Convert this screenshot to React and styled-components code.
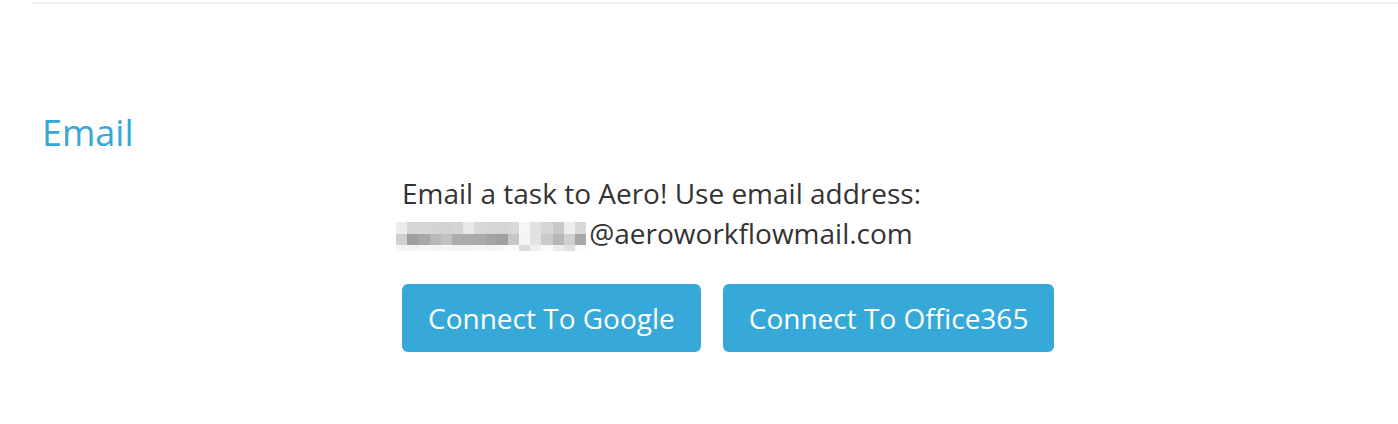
import React from "react";
import styled, { createGlobalStyle } from "styled-components";

const GlobalStyle = createGlobalStyle`
  body {
    margin: 0;
    background: #fff;
    font-family: "Open Sans", "Liberation Sans", sans-serif;
  }
`;

const Page = styled.div`
  width: 1398px;
  height: 424px;
  padding-left: 32px;
  box-sizing: border-box;
  overflow: hidden;
`;

const Divider = styled.div`
  margin-top: 2px;
  border-top: 2px solid #ededed;
`;

const Section = styled.section`
  padding: 104px 0 0 10px;
`;

const Heading = styled.h2`
  margin: 0;
  font-size: 36px;
  font-weight: 400;
  line-height: 50px;
  color: #35a8d8;
`;

const Body = styled.div`
  margin-left: 360px;
  margin-top: 15px;
`;

const Text = styled.p`
  margin: 0;
  font-size: 28px;
  line-height: 40px;
  color: #333;
`;

// pixelated mask over the private part of the address
const Blur = styled.span`
  display: inline-block;
  overflow: hidden;
  vertical-align: -7px;
  margin: 0 3px 0 -6px;
`;

const BlurGrid = styled.span`
  display: grid;
  grid-template-columns: repeat(17, 11.2px);
  grid-template-rows: 12px 11px 6px;
`;

const Cell = styled.span`
  background: ${(p) => p.$c};
`;

const Actions = styled.div`
  display: flex;
  gap: 22px;
  margin-top: 31px;
`;

const Button = styled.button`
  height: 68px;
  padding: 0 26px;
  border: none;
  border-radius: 6px;
  background: #36a9d9;
  color: #fff;
  font-family: "Open Sans", "Liberation Sans", sans-serif;
  font-size: 28px;
  cursor: pointer;
`;

const blurRows = [
  ["#ececec", "#d6d6d6", "#d6d6d6", "#d4d4d4", "#d2d2d2", "#d4d4d4", "#e8e8e8", "#d8d8d8", "#d6d6d6", "#d4d4d4", "#d8d8d8", "#f6f6f6", "#e0e0e0", "#d6d6d6", "#c8c8c8", "#ececec", "#d8d8d8"],
  ["#d0d0d0", "#9e9e9e", "#a8a8a8", "#b8b8b8", "#c2c2c2", "#acacac", "#ababab", "#ababab", "#a4a4a4", "#a0a0a0", "#c6c6c6", "#f4f4f4", "#e2e2e2", "#cacaca", "#b6b6b6", "#d0d0d0", "#a8a8a8"],
  ["#f4f4f4", "#f2f2f2", "#f6f6f6", "#f4f4f4", "#f6f6f6", "#f2f2f2", "#f4f4f4", "#f6f6f6", "#f4f4f4", "#f8f8f8", "#fafafa", "#dadada", "#eeeeee", "#fafafa", "#ececec", "#e0e0e0", "#fafafa"],
];

export default function App() {
  return (
    <>
      <GlobalStyle />
      <Page>
        <Divider />
        <Section>
          <Heading>Email</Heading>
          <Body>
            <Text>Email a task to Aero! Use email address:</Text>
            <Text>
              <Blur aria-hidden="true">
                <BlurGrid>
                  {blurRows.flat().map((c, i) => (
                    <Cell key={i} $c={c} />
                  ))}
                </BlurGrid>
              </Blur>
              @aeroworkflowmail.com
            </Text>
            <Actions>
              <Button>Connect To Google</Button>
              <Button>Connect To Office365</Button>
            </Actions>
          </Body>
        </Section>
      </Page>
    </>
  );
}
